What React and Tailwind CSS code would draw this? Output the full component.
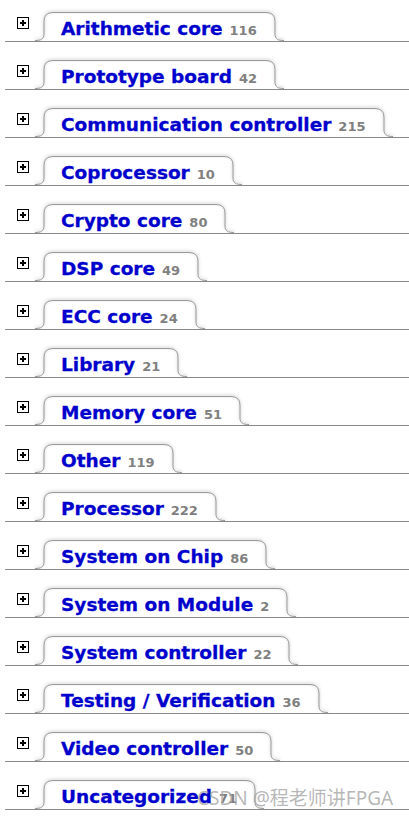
const categories = [
  { name: 'Arithmetic core', count: 116 },
  { name: 'Prototype board', count: 42 },
  { name: 'Communication controller', count: 215 },
  { name: 'Coprocessor', count: 10 },
  { name: 'Crypto core', count: 80 },
  { name: 'DSP core', count: 49 },
  { name: 'ECC core', count: 24 },
  { name: 'Library', count: 21 },
  { name: 'Memory core', count: 51 },
  { name: 'Other', count: 119 },
  { name: 'Processor', count: 222 },
  { name: 'System on Chip', count: 86 },
  { name: 'System on Module', count: 2 },
  { name: 'System controller', count: 22 },
  { name: 'Testing / Verification', count: 36 },
  { name: 'Video controller', count: 50 },
  { name: 'Uncategorized', count: 71 },
];

function PlusBox() {
  return (
    <svg width="12" height="12" viewBox="0 0 12 12" className="mt-[5px] shrink-0">
      <rect x="0.5" y="0.5" width="11" height="11" fill="#fff" stroke="#000" />
      <path d="M3 6h6M6 3v6" stroke="#000" strokeWidth="2" />
    </svg>
  );
}

function Tab({ name, count }) {
  return (
    <div className="relative flex h-[29px] items-end ml-[6px]">
      {/* outline of the tab */}
      <div className="absolute inset-0 flex drop-shadow-[0_-1px_1.5px_rgba(0,0,0,0.3)]">
        <svg width="18" height="29" viewBox="0 0 18 29" className="shrink-0">
          <path d="M0 28.5C6 28.5 9 27 9 22V9Q9 0.5 18 0.5" fill="none" stroke="#999" />
        </svg>
        <div className="flex-1 border-t border-[#999]" />
        <svg width="18" height="29" viewBox="0 0 18 29" className="shrink-0">
          <path d="M0 0.5Q9 0.5 9 9V22C9 27 12 28.5 18 28.5" fill="none" stroke="#999" />
        </svg>
      </div>
      <div className="relative flex items-baseline pl-[26px] pr-[27px] pb-[3px] font-['DejaVu_Sans',Verdana,sans-serif] font-bold leading-none">
        <span className="text-[18.5px] text-[#0000cc] [-webkit-text-stroke:0.3px_#0000cc]">{name}</span>
        <span className="ml-[7px] text-[13px] text-[#808080]">{count}</span>
      </div>
    </div>
  );
}

export default function App() {
  return (
    <div className="relative w-[409px] h-[821px] bg-white overflow-hidden pt-[12px]">
      <div className="flex flex-col gap-[18px]">
        {categories.map((c) => (
          <div key={c.name} className="flex items-start ml-[5px] pl-[12px] border-b border-[#8a8a8a]">
            <PlusBox />
            <Tab name={c.name} count={c.count} />
          </div>
        ))}
      </div>
      <div className="absolute left-[197px] top-[789px] text-[19px] leading-none text-[rgba(160,160,160,0.75)] font-['Noto_Sans','Noto_Sans_CJK_SC',sans-serif]">
        CSDN @程老师讲FPGA
      </div>
    </div>
  );
}
